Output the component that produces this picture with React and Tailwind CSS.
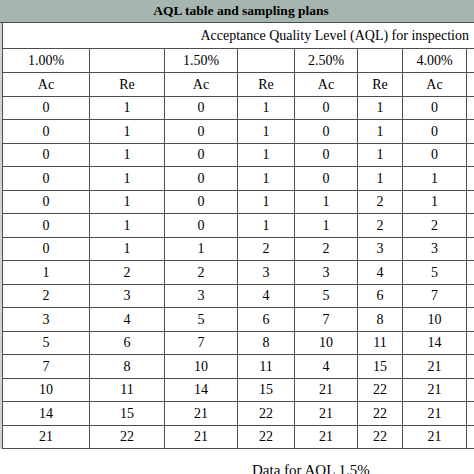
import React from "react";

const rows = [
  [0, 1, 0, 1, 0, 1, 0],
  [0, 1, 0, 1, 0, 1, 0],
  [0, 1, 0, 1, 0, 1, 0],
  [0, 1, 0, 1, 0, 1, 1],
  [0, 1, 0, 1, 1, 2, 1],
  [0, 1, 0, 1, 1, 2, 2],
  [0, 1, 1, 2, 2, 3, 3],
  [1, 2, 2, 3, 3, 4, 5],
  [2, 3, 3, 4, 5, 6, 7],
  [3, 4, 5, 6, 7, 8, 10],
  [5, 6, 7, 8, 10, 11, 14],
  [7, 8, 10, 11, 4, 15, 21],
  [10, 11, 14, 15, 21, 22, 21],
  [14, 15, 21, 22, 21, 22, 21],
  [21, 22, 21, 22, 21, 22, 21],
];

const levels = ["1.00%", "", "1.50%", "", "2.50%", "", "4.00%", ""];
const heads = ["Ac", "Re", "Ac", "Re", "Ac", "Re", "Ac", ""];

const cell = "border border-[#4d4d4d] text-center p-0 align-middle";

function App() {
  return (
    <div className="w-[474px] h-[474px] overflow-hidden bg-white text-black font-['Liberation_Serif',serif]">
      {/* title bar */}
      <div className="h-[23px] bg-[#a7b5b1] border-b border-[#4d4d4d] flex items-center justify-center pl-[8px] text-[13.5px] font-bold">
        AQL table and sampling plans
      </div>

      <div className="border-l-2 border-[#d2d2d2] w-[490px]">
        <table className="table-fixed border-collapse w-[488px] text-[14px]">
          <colgroup>
            <col className="w-[87px]" />
            <col className="w-[75px]" />
            <col className="w-[73px]" />
            <col className="w-[57px]" />
            <col className="w-[63px]" />
            <col className="w-[45px]" />
            <col className="w-[64px]" />
            <col className="w-[24px]" />
          </colgroup>
          <tbody>
            <tr>
              <td colSpan={8} className="border-x border-b border-[#4d4d4d] h-[25px] text-right pr-[21px] text-[14px] p-0">
                Acceptance Quality Level (AQL) for inspection
              </td>
            </tr>
            <tr>
              {levels.map((l, i) => (
                <td key={i} className={cell + " h-[24px]"}>{l}</td>
              ))}
            </tr>
            <tr>
              {heads.map((h, i) => (
                <td key={i} className={cell + " h-[24px]"}>{h}</td>
              ))}
            </tr>
            {rows.map((r, i) => (
              <tr key={i}>
                {r.map((v, j) => (
                  <td key={j} className={cell + " h-[23.5px]"}>{v}</td>
                ))}
                <td className={cell + " h-[23.5px]"}></td>
              </tr>
            ))}
          </tbody>
        </table>
      </div>

      <div className="pt-[14px] pl-[252px] text-[15px] leading-none">
        Data for AQL 1.5%
      </div>
    </div>
  );
}

export default App;
